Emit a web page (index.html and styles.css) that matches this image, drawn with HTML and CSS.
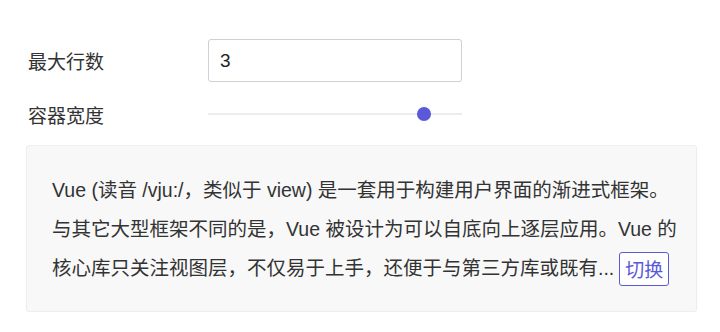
FILE: index.html
```html
<!DOCTYPE html>
<html lang="zh-CN">
<head>
<meta charset="utf-8">
<link rel="stylesheet" href="styles.css">
</head>
<body>
<div class="page">
  <div class="row row-input">
    <label class="label">最大行数</label>
    <div class="input">3</div>
  </div>
  <div class="row row-slider">
    <label class="label">容器宽度</label>
    <div class="slider">
      <div class="track"></div>
      <div class="thumb" style="left: 216px"></div>
    </div>
  </div>
  <div class="card">
    <div class="line">Vue (读音 /vju:/，类似于 view) 是一套用于构建用户界面的渐进式框架。</div>
    <div class="line">与其它大型框架不同的是，Vue 被设计为可以自底向上逐层应用。Vue 的</div>
    <div class="line">核心库只关注视图层，不仅易于上手，还便于与第三方库或既有...<button class="toggle">切换</button></div>
  </div>
</div>
</body>
</html>
```
FILE: styles.css
```css
html, body {
  margin: 0;
  padding: 0;
  background: #ffffff;
}
body {
  font-family: "Liberation Sans", "Noto Sans CJK SC", sans-serif;
  color: #333333;
}
.page {
  padding: 39px 0 0 26px;
  width: 671px;
}
.row {
  display: flex;
  align-items: center;
}
.label {
  width: 180px;
  padding-left: 2px;
  font-size: 19px;
  color: #333333;
}
.row-input {
  height: 43px;
}
.input {
  box-sizing: border-box;
  width: 254px;
  height: 43px;
  border: 1px solid #cfcfd4;
  border-radius: 3px;
  padding-left: 11px;
  font-size: 19px;
  line-height: 41px;
  color: #222222;
}
.row-slider {
  height: 30px;
  margin-top: 17px;
}
.slider {
  position: relative;
  width: 254px;
  height: 14px;
}
.track {
  position: absolute;
  left: 0;
  right: 0;
  top: 6px;
  height: 2px;
  background: #ebebf0;
}
.thumb {
  position: absolute;
  top: 0;
  width: 14px;
  height: 14px;
  margin-left: -7px;
  border-radius: 50%;
  background: #5959d9;
}
.card {
  box-sizing: border-box;
  margin-top: 16px;
  width: 671px;
  height: 167px;
  padding: 25px 10px 0 25px;
  background: #f8f8f8;
  border: 1px solid #eeeeee;
  border-radius: 3px;
  box-shadow: 0 1px 2px rgba(0,0,0,0.04);
}
.line {
  white-space: nowrap;
  font-size: 19.5px;
  line-height: 39px;
  height: 39px;
  color: #333333;
}
.toggle {
  box-sizing: border-box;
  margin-left: 5px;
  width: 50px;
  height: 34px;
  vertical-align: middle;
  position: relative;
  top: -1px;
  padding: 0;
  background: #ffffff;
  border: 1px solid #5959d9;
  border-radius: 3px;
  color: #5959d9;
  font-family: "Liberation Sans", "Noto Sans CJK SC", sans-serif;
  font-size: 19px;
}
```
